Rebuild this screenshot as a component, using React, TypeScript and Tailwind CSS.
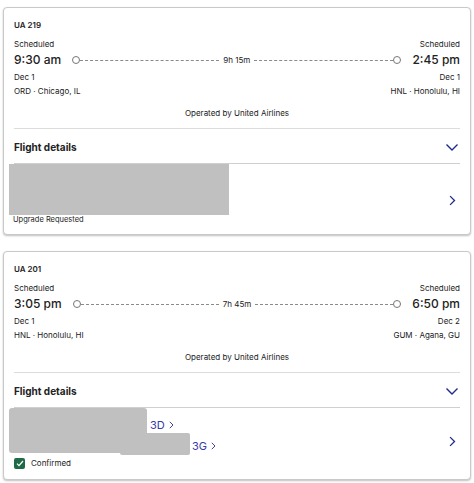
import React from "react";

type Flight = {
  number: string;
  depTime: string;
  arrTime: string;
  duration: string;
  depDate: string;
  arrDate: string;
  depCity: string;
  arrCity: string;
};

const flights: Flight[] = [
  {
    number: "UA 219",
    depTime: "9:30 am",
    arrTime: "2:45 pm",
    duration: "9h 15m",
    depDate: "Dec 1",
    arrDate: "Dec 1",
    depCity: "ORD · Chicago, IL",
    arrCity: "HNL · Honolulu, HI",
  },
  {
    number: "UA 201",
    depTime: "3:05 pm",
    arrTime: "6:50 pm",
    duration: "7h 45m",
    depDate: "Dec 1",
    arrDate: "Dec 2",
    depCity: "HNL · Honolulu, HI",
    arrCity: "GUM · Agana, GU",
  },
];

const ChevronDown = () => (
  <svg width="14" height="9" viewBox="0 0 14 9" fill="none">
    <path d="M1.5 1.5l5.5 5.5 5.5-5.5" stroke="#1f2a8a" strokeWidth="1.4" />
  </svg>
);

const ChevronRight = ({ size = 9 }: { size?: number }) => (
  <svg width={size * 0.6} height={size} viewBox="0 0 6 10" fill="none">
    <path d="M1 1l4 4-4 4" stroke="currentColor" strokeWidth="1.2" />
  </svg>
);

const Dash = () => (
  <div className="flex-1 border-t border-dashed border-[#8a8a8a]" />
);

const Circle = () => (
  <div className="h-[8px] w-[8px] rounded-full border border-[#777] bg-white" />
);

const Header = ({ f }: { f: Flight }) => (
  <div className="px-[10px] pt-[11px] text-[#222]">
    <div className="text-[8px] font-semibold leading-[12px]">{f.number}</div>
    <div className="mt-[7px] flex justify-between text-[8px] leading-[12px]">
      <span>Scheduled</span>
      <span>Scheduled</span>
    </div>
    <div className="flex h-[20px] items-center">
      <span className="text-[12px] font-medium leading-[20px]">{f.depTime}</span>
      <div className="mx-[11px] flex flex-1 items-center">
        <Circle />
        <Dash />
        <span className="px-[4px] text-[8px] leading-[10px]">{f.duration}</span>
        <Dash />
        <Circle />
      </div>
      <span className="text-[12px] font-medium leading-[20px]">{f.arrTime}</span>
    </div>
    <div className="mt-[1px] flex justify-between text-[8px] leading-[12px]">
      <span>{f.depDate}</span>
      <span>{f.arrDate}</span>
    </div>
    <div className="mt-[2px] flex justify-between text-[8px] leading-[12px]">
      <span>{f.depCity}</span>
      <span>{f.arrCity}</span>
    </div>
    <div className="mt-[10px] text-center text-[8px] leading-[12px]">
      Operated by United Airlines
    </div>
    <div className="mt-[9px] border-t border-[#dcdcdc]" />
    <div className="flex h-[34px] items-center justify-between pt-[2px]">
      <span className="text-[10px] font-bold">Flight details</span>
      <span className="mr-[1px]">
        <ChevronDown />
      </span>
    </div>
    <div className="border-t border-[#cfcfcf]" />
  </div>
);

const Card = ({ f, children }: { f: Flight; children: React.ReactNode }) => (
  <div className="mx-[3px] rounded-[4px] border border-[#c9c9c9] bg-white shadow-[0_1px_2px_rgba(0,0,0,0.25)]">
    <Header f={f} />
    {children}
  </div>
);

export default function App() {
  return (
    <div
      className="min-h-[483px] w-[474px] bg-white pt-[7px]"
      style={{ fontFamily: "Inter, 'Liberation Sans', sans-serif" }}
    >
      <Card f={flights[0]}>
        <div className="flex h-[70px] items-start justify-between pl-[5px] pr-[14px] text-[#222]">
          <div>
            <div className="h-[51px] w-[220px] bg-[#c0c0c0]" />
            <div className="pl-[4px] text-[7.5px] leading-[10px]">Upgrade Requested</div>
          </div>
          <span className="mt-[31px] text-[#1f2a8a]">
            <ChevronRight size={11} />
          </span>
        </div>
      </Card>
      <div className="h-[16px]" />
      <Card f={flights[1]}>
        <div className="relative h-[71px] px-[10px] text-[#222]">
          <div className="absolute left-[5px] top-0 h-[45px] w-[138px] rounded-[3px] bg-[#c0c0c0]" />
          <div className="absolute left-[116px] top-[25px] h-[22px] w-[70px] rounded-[2px] bg-[#c0c0c0]" />
          <div className="flex items-center justify-between">
            <div className="pt-[10px]">
              <div className="flex items-center gap-[4px] pl-[136px] text-[11px] leading-[14px] text-[#3a3aa8]">
                3D <ChevronRight size={8} />
              </div>
              <div className="mt-[7px] flex items-center gap-[4px] pl-[178px] text-[11px] leading-[14px] text-[#3a3aa8]">
                3G <ChevronRight size={8} />
              </div>
            </div>
            <span className="mr-[4px] mt-[22px] text-[#1f2a8a]">
              <ChevronRight size={11} />
            </span>
          </div>
          <div className="mt-[4px] flex items-center gap-[6px]">
            <div className="flex h-[11px] w-[11px] items-center justify-center rounded-[2px] bg-[#1e6b45]">
              <svg width="8" height="7" viewBox="0 0 8 7" fill="none">
                <path d="M1 3.6l2 2 4-4.6" stroke="white" strokeWidth="1.3" />
              </svg>
            </div>
            <span className="text-[8px] leading-[12px]">Confirmed</span>
          </div>
        </div>
      </Card>
    </div>
  );
}
